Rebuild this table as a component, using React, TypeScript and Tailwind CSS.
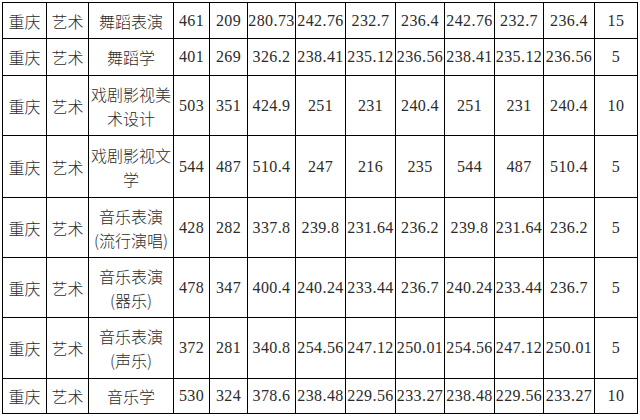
import React from 'react';

type Row = {
  major: string[];
  nums: string[];
  h: string;
};

const rows: Row[] = [
  { major: ['舞蹈表演'], nums: ['461', '209', '280.73', '242.76', '232.7', '236.4', '242.76', '232.7', '236.4', '15'], h: 'h-[36px]' },
  { major: ['舞蹈学'], nums: ['401', '269', '326.2', '238.41', '235.12', '236.56', '238.41', '235.12', '236.56', '5'], h: 'h-[37px]' },
  { major: ['戏剧影视美', '术设计'], nums: ['503', '351', '424.9', '251', '231', '240.4', '251', '231', '240.4', '10'], h: 'h-[60px]' },
  { major: ['戏剧影视文', '学'], nums: ['544', '487', '510.4', '247', '216', '235', '544', '487', '510.4', '5'], h: 'h-[62px]' },
  { major: ['音乐表演', '(流行演唱)'], nums: ['428', '282', '337.8', '239.8', '231.64', '236.2', '239.8', '231.64', '236.2', '5'], h: 'h-[60px]' },
  { major: ['音乐表演', '(器乐)'], nums: ['478', '347', '400.4', '240.24', '233.44', '236.7', '240.24', '233.44', '236.7', '5'], h: 'h-[60px]' },
  { major: ['音乐表演', '(声乐)'], nums: ['372', '281', '340.8', '254.56', '247.12', '250.01', '254.56', '247.12', '250.01', '5'], h: 'h-[61px]' },
  { major: ['音乐学'], nums: ['530', '324', '378.6', '238.48', '229.56', '233.27', '238.48', '229.56', '233.27', '10'], h: 'h-[35px]' },
];

const widths = [44, 42, 85, 36, 38, 48, 50, 50, 49, 50, 49, 51, 43];

const cjk = "font-['Noto_Sans_CJK_SC',sans-serif] text-[16px] font-light";
const num = "font-['Liberation_Serif',serif] text-[16px] tracking-[0.4px]";

export default function App() {
  return (
    <div className="w-[640px] h-[420px] bg-white pl-[2px] pt-[2px] text-[#2b2b2b]">
      <table className="table-fixed border-collapse w-[636px]">
        <colgroup>
          {widths.map((w, i) => (
            <col key={i} style={{ width: w }} />
          ))}
        </colgroup>
        <tbody>
          {rows.map((r, i) => (
            <tr key={i} className={r.h}>
              <td className={`border border-black text-center p-0 ${cjk}`}>重庆</td>
              <td className={`border border-black text-center p-0 ${cjk}`}>艺术</td>
              <td className={`border border-black text-center p-0 leading-[24px] ${cjk}`}>
                {r.major.map((m, j) => (
                  <div key={j} className="whitespace-nowrap">{m}</div>
                ))}
              </td>
              {r.nums.map((n, j) => (
                <td key={j} className={`border border-black text-center p-0 whitespace-nowrap ${num}`}>
                  {n}
                </td>
              ))}
            </tr>
          ))}
        </tbody>
      </table>
    </div>
  );
}
